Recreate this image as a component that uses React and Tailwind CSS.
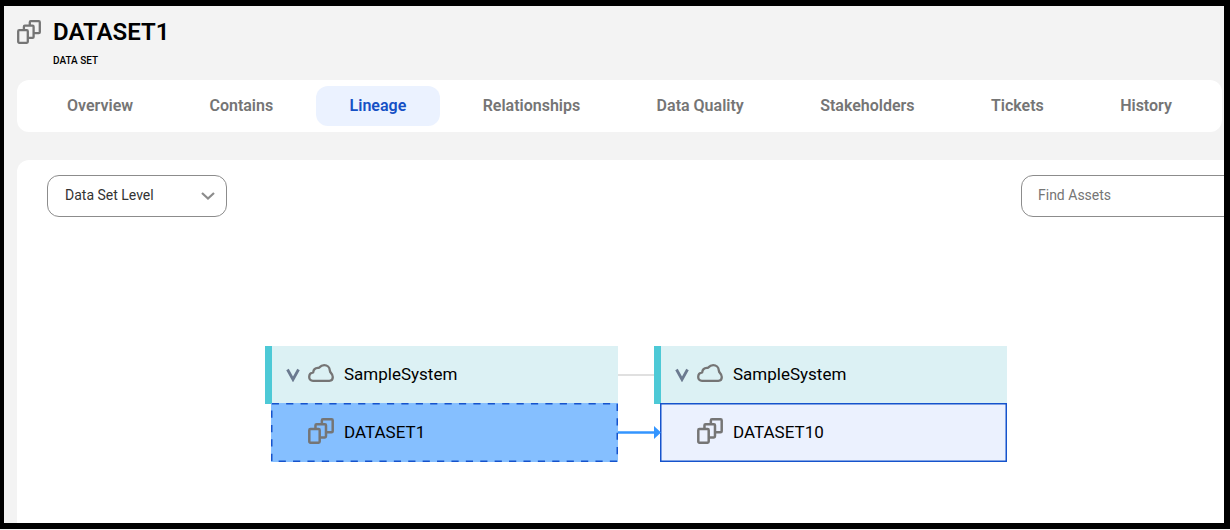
import React, { useState } from 'react';

const TABS = ['Overview', 'Contains', 'Lineage', 'Relationships', 'Data Quality', 'Stakeholders', 'Tickets', 'History'];

const NODES = [
  { id: 'source', system: 'SampleSystem', dataset: 'DATASET1',  pos: 'left-[248px] top-[186px]', box: 'bg-[#85bfff]', dashed: true },
  { id: 'target', system: 'SampleSystem', dataset: 'DATASET10', pos: 'left-[637px] top-[186px]', box: 'bg-[#ebf1fe]', dashed: false },
];

function DatasetIcon({ className }) {
  return (
    <svg viewBox="0 0 24 24" fill="none" stroke="#757575" strokeWidth="2.3" strokeLinejoin="round" className={className}>
      <rect x="1.2" y="10.2" width="9.6" height="12.6" rx="1"/>
      <path d="M6.9 10.200V6.700a1 1 0 0 1 1-1h7.700a1 1 0 0 1 1 1v10.200a1 1 0 0 1-1 1H10.800"/>
      <path d="M12.800 5.700V2.200a1 1 0 0 1 1-1h8a1 1 0 0 1 1 1v10a1 1 0 0 1-1 1h-5.200"/>
    </svg>
  );
}

function CloudIcon() {
  return (
    <svg viewBox="0 0 26 18" fill="none" stroke="#757575" strokeWidth="2.3" strokeLinejoin="round" className="mb-1 h-[18px] w-[26px]">
      <path d="M5 16.800C2.700 16.800 1.200 15.300 1.200 12.900C1.200 10.500 2.800 8.700 5.200 8.300C5.500 5.700 7.300 4 9.800 3.900C10.600 3.900 11 3.800 11.400 3.400C12.700 2 14.300 1.200 16.200 1.200C19.200 1.200 21.600 3.400 21.800 6.300C21.900 7.500 22.300 8.300 23.100 9.100C24.300 10.300 24.800 11.500 24.800 13.100C24.800 15.400 23.500 16.800 21.400 16.800z"/>
    </svg>
  );
}

function LineageNode({ node }) {
  return (
    <div className={`absolute w-[353px] ${node.pos}`}>
      <div className="flex h-[58px] items-center border-l-[7px] border-[#4dc9d6] bg-[#dcf1f4] pl-3.5">
        <button aria-label="Collapse system" className="mr-2">
          <svg viewBox="0 0 14 14" fill="none" stroke="#6b7a90" strokeWidth="2.8" className="size-3.5">
            <path d="M1.500 1.500L7 11.500L12.500 1.500"/>
          </svg>
        </button>
        <CloudIcon/>
        <span className="ml-2.5 text-[17px]">{node.system}</span>
      </div>
      <div className={`relative ml-1.5 -mt-px flex h-[59px] items-center pl-[37px] ${node.box}`}>
        <svg className="absolute inset-0 size-full" fill="none">
          <rect x="0.75" y="0.75" width="345.5" height="57.5" stroke="#1553cc" strokeWidth="1.5" strokeDasharray={node.dashed ? '7.2 7.2' : undefined}/>
        </svg>
        <DatasetIcon className="mb-1 size-[26px]"/>
        <span className="ml-2.5 text-[17px]">{node.dataset}</span>
      </div>
    </div>
  );
}

export default function App() {
  const [active, setActive] = useState('Lineage');
  const [level, setLevel]   = useState('dataset');
  const [search, setSearch] = useState('');

  return (
    <div className="h-screen border-b border-[#f3f3f3] bg-black pt-1.5 pr-1.5 pb-1.5 pl-1 font-['Roboto',sans-serif] text-black">
      <div className="flex h-full flex-col overflow-hidden bg-[#f3f3f3] pl-[13px] pr-0.5">
        <header className="flex h-[74px] shrink-0 gap-3 pt-3">
          <DatasetIcon className="mt-0.5 size-6"/>
          <div>
            <h1 className="text-2xl leading-7 font-semibold">DATASET1</h1>
            <p className="mt-2 text-[10px] leading-[14px] font-medium">DATA SET</p>
          </div>
        </header>

        <nav className="flex h-[52px] shrink-0 items-center justify-between rounded-xl bg-white px-4">
          {TABS.map(t => (
            <button key={t}
                    onClick={() => setActive(t)}
                    className={`h-10 rounded-xl px-[34px] text-base font-semibold whitespace-nowrap
                      ${active === t ? 'bg-[#ebf2ff] text-[#1550c5]' : 'text-[#757575]'}`}>
              {t}
            </button>
          ))}
        </nav>

        <main className="relative mt-7 -mr-8 flex-1 rounded-tl-xl bg-white">
          <div className="flex justify-between pt-[15px] pr-4 pl-[30px]">
            <div className="relative">
              <select value={level}
                      onChange={e => setLevel(e.target.value)}
                      aria-label="Lineage level"
                      className="h-[42px] w-[180px] appearance-none rounded-xl border border-[#8c8c8c] bg-white pb-0.5 pl-[17px] text-sm text-[#333]">
                <option value="dataset">Data Set Level</option>
                <option value="system">System Level</option>
              </select>
              <svg viewBox="0 0 14 8" fill="none" stroke="#8c8c8c" strokeWidth="2.2" className="pointer-events-none absolute top-[17px] right-3 h-2 w-3.5">
                <path d="M1 1L7 6.500L13 1"/>
              </svg>
            </div>
            <input value={search}
                   onChange={e => setSearch(e.target.value)}
                   placeholder="Find Assets"
                   aria-label="Find Assets"
                   className="h-[42px] w-[217px] rounded-xl border border-[#8c8c8c] bg-white px-4 pb-0.5 text-sm placeholder:text-[#757575]"/>
          </div>

          {NODES.map(n => <LineageNode key={n.id} node={n}/>)}
          <svg viewBox="0 0 44 70" fill="none" className="absolute top-[210px] left-[600px] h-[70px] w-11">
            <path d="M1 5H37" stroke="#e0e0e0" strokeWidth="2"/>
            <path d="M1 62.500H38" stroke="#3395ff" strokeWidth="2.400"/>
            <path d="M37 56L44 62.500L37 69z" fill="#3395ff"/>
          </svg>
        </main>
      </div>
    </div>
  );
}
